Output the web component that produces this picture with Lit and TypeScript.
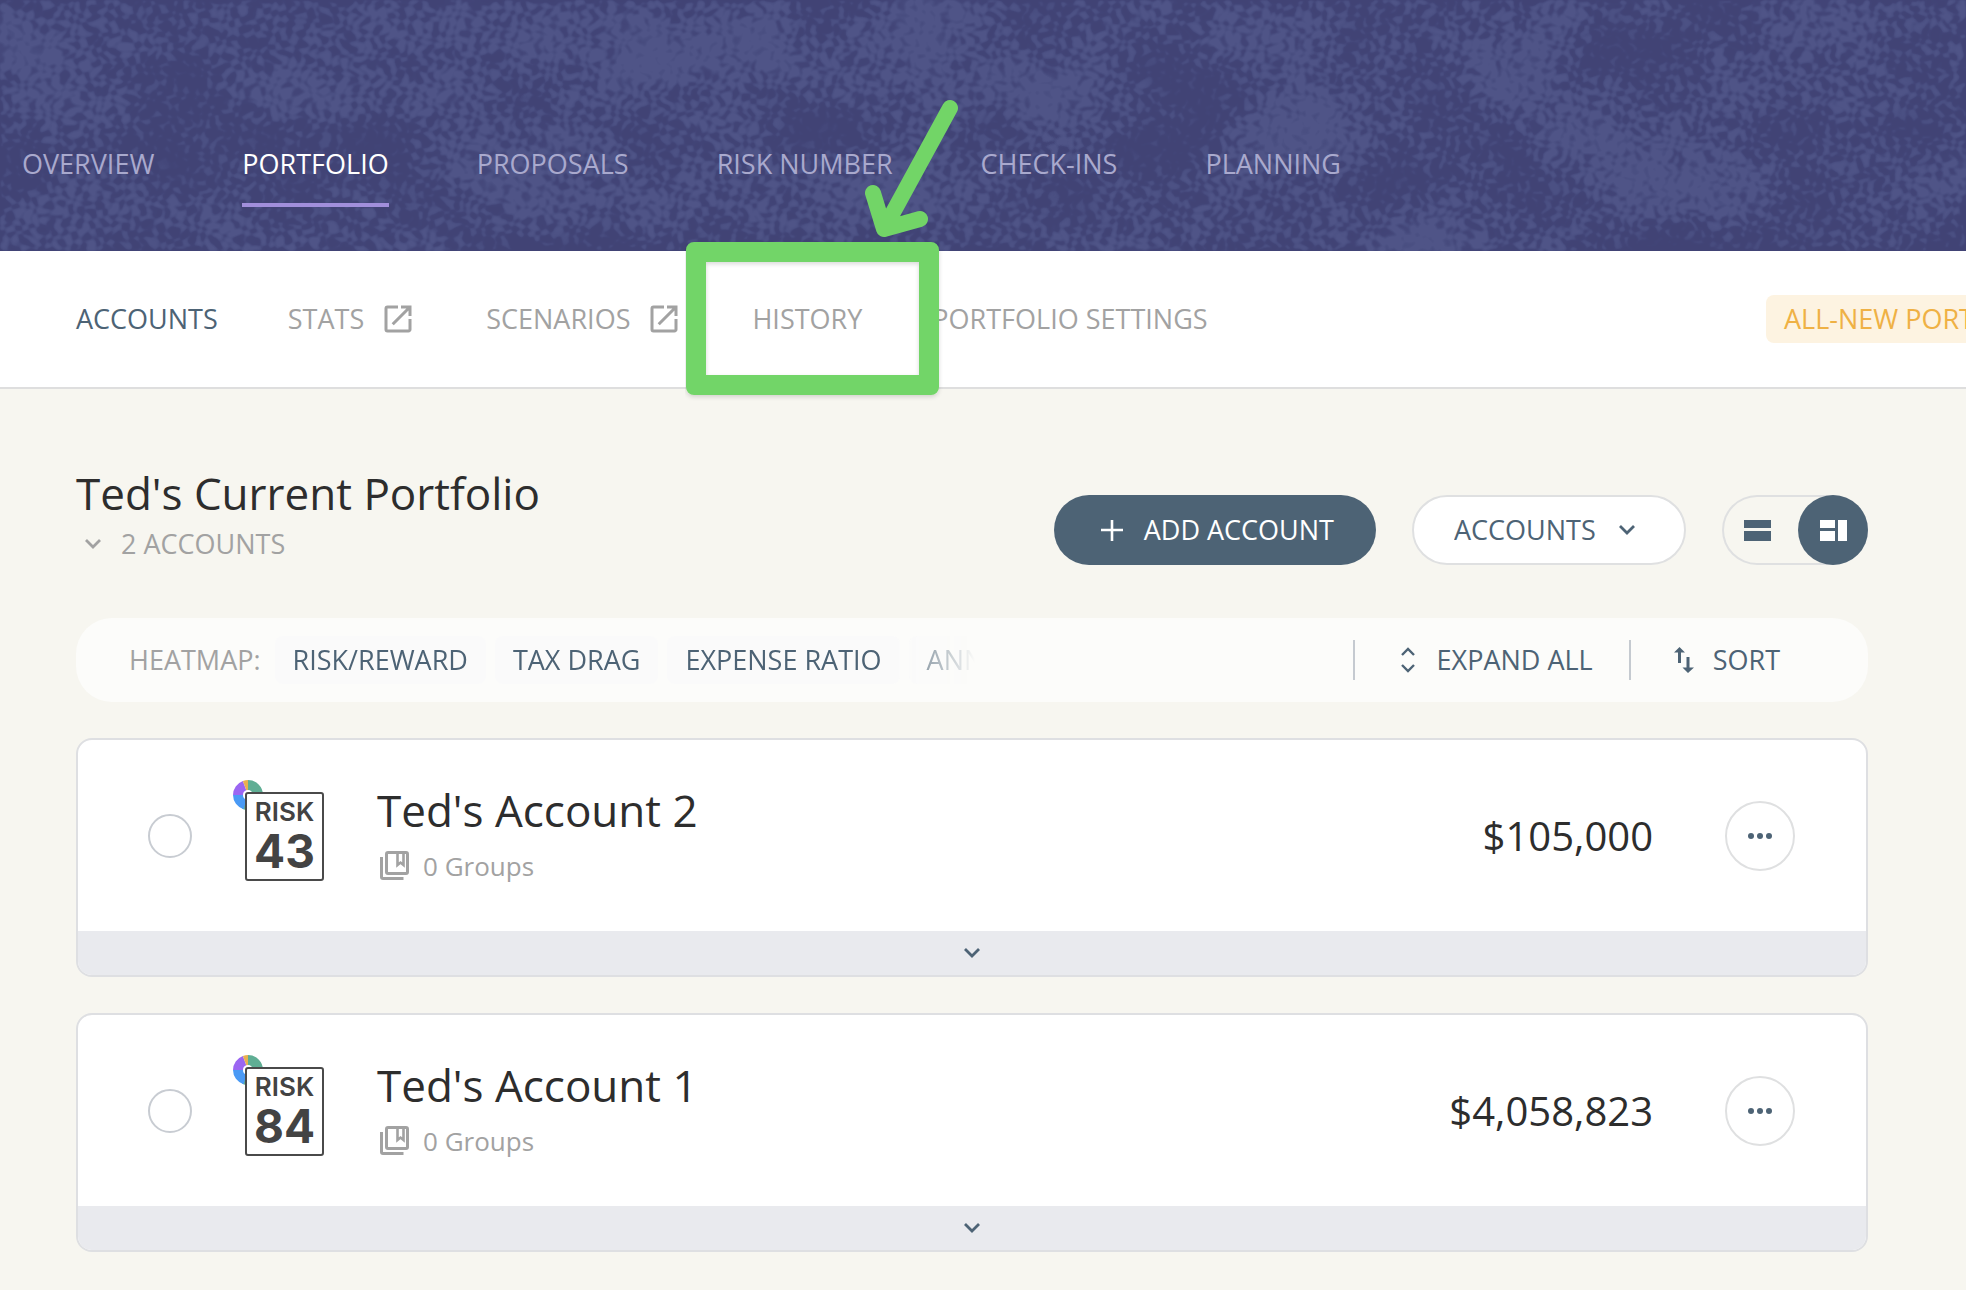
import { LitElement, html, css, svg } from "lit";
import { customElement, property, state } from "lit/decorators.js";

const chevronDown = html`<svg class="chevron" viewBox="0 0 18 12" aria-hidden="true">
  <path d="M2 2l7 7 7-7" fill="none" stroke="currentColor" stroke-width="2.8" />
</svg>`;

const openInNew = html`<svg class="open-icon" viewBox="0 0 24 24" aria-hidden="true">
  <path
    fill="currentColor"
    d="M19 19H5V5h7V3H5a2 2 0 0 0-2 2v14a2 2 0 0 0 2 2h14c1.1 0 2-.9 2-2v-7h-2v7zM14 3v2h3.59l-9.83 9.83 1.41 1.41L19 6.41V10h2V3h-7z"
  />
</svg>`;

const baseStyles = css`
  *,
  *::before,
  *::after {
    box-sizing: border-box;
  }
  button,
  select,
  input {
    margin: 0;
    padding: 0;
    border: 0;
    background: none;
    font: inherit;
    color: inherit;
    cursor: pointer;
  }
  a {
    color: inherit;
    text-decoration: none;
  }
  svg {
    display: block;
    flex: none;
  }
  .chevron {
    width: 18px;
    height: 12px;
  }
`;

@customElement("woven-texture")
export class WovenTexture extends LitElement {
  static styles = css`
    :host {
      display: block;
      overflow: hidden;
      background: #474c7f;
    }
    svg {
      display: block;
      width: 100%;
      height: 100%;
    }
  `;

  render() {
    return html`<svg aria-hidden="true">
      ${svg`
        <defs>
          <pattern id="threads" width="16" height="16" patternUnits="userSpaceOnUse" patternTransform="rotate(62)">
            <rect width="16" height="16" fill="#000" />
            <path d="M0 0h8v8H0zM8 8h8v8H8z" fill="#fff" />
          </pattern>
          <filter id="weave" x="0" y="0" width="100%" height="100%" color-interpolation-filters="sRGB">
            <feTurbulence type="fractalNoise" baseFrequency="0.04 0.07" numOctaves="2" seed="4" result="warp" />
            <feDisplacementMap in="SourceGraphic" in2="warp" scale="24" xChannelSelector="R" yChannelSelector="G" result="bent" />
            <feGaussianBlur in="bent" stdDeviation="1.8" result="soft" />
            <feTurbulence type="fractalNoise" baseFrequency="0.008 0.009" numOctaves="5" seed="27" />
            <feColorMatrix values="1 0 0 0 0  1 0 0 0 0  1 0 0 0 0  0 0 0 0 1" result="cloud" />
            <feComposite in="soft" in2="cloud" operator="arithmetic" k1="0" k2="1.1" k3="2.2" k4="-1.12" />
            <feComponentTransfer>
              <feFuncR type="table" tableValues="0.255 0.26 0.29 0.31" />
              <feFuncG type="table" tableValues="0.265 0.27 0.31 0.33" />
              <feFuncB type="table" tableValues="0.46 0.47 0.51 0.53" />
              <feFuncA type="linear" slope="0" intercept="1" />
            </feComponentTransfer>
          </filter>
        </defs>
        <rect width="100%" height="100%" fill="url(#threads)" filter="url(#weave)" />
      `}
    </svg>`;
  }
}

@customElement("risk-badge")
export class RiskBadge extends LitElement {
  @property({ type: Number }) value = 0;

  static styles = css`
    :host {
      display: block;
      position: relative;
    }
    .donut {
      position: absolute;
      left: -12px;
      top: -12px;
      width: 30px;
      height: 30px;
    }
    .sign {
      position: relative;
      box-sizing: border-box;
      width: 79px;
      height: 89px;
      padding-top: 6px;
      border: 2px solid #4a4a4a;
      border-radius: 3px;
      background: #fff;
      color: #434343;
      text-align: center;
      font-family: Inter, "Liberation Sans", sans-serif;
    }
    .label {
      font-size: 26px;
      line-height: 24px;
      font-weight: 600;
    }
    .number {
      font-size: 46px;
      line-height: 54px;
      font-weight: 700;
    }
  `;

  render() {
    return html`
      <svg class="donut" viewBox="0 0 30 30" aria-hidden="true">
        <g fill="none" stroke-width="10">
          <path stroke="#5fae94" d="M15 5a10 10 0 0 1 0 20" />
          <path stroke="#5fae94" d="M15 25a10 10 0 0 1-4-.8" />
          <path stroke="#4a9af5" d="M12 24.5A10 10 0 0 1 5 15" />
          <path stroke="#9b66f2" d="M5 15A10 10 0 0 1 11.600 5.600" />
          <path stroke="#e9b04f" d="M11.600 5.600A10 10 0 0 1 15 5" />
        </g>
      </svg>
      <div class="sign">
        <div class="label">RISK</div>
        <div class="number">${this.value}</div>
      </div>
    `;
  }
}

@customElement("account-card")
export class AccountCard extends LitElement {
  @property() name = "";
  @property() amount = "";
  @property({ type: Number }) risk = 0;
  @property({ type: Number }) groups = 0;

  static styles = [
    baseStyles,
    css`
      :host {
        display: block;
        overflow: hidden;
        border: 2px solid #dedfe2;
        border-radius: 16px;
        background: #fff;
        font-weight: 400;
      }
      .row {
        display: flex;
        align-items: center;
        padding: 40px 71px 39px 70px;
      }
      .pick {
        appearance: none;
        flex: none;
        width: 44px;
        height: 44px;
        margin-right: 53px;
        border: 2px solid #c8ccd2;
        border-radius: 50%;
      }
      .pick:checked {
        background: #4d6375;
      }
      .text {
        flex: 1;
        min-width: 0;
        padding-bottom: 10px;
        margin-left: 53px;
      }
      .name {
        margin: 0;
        font-size: 44px;
        line-height: 60px;
        font-weight: 400;
        color: #2d2d2d;
      }
      .groups {
        display: flex;
        align-items: center;
        gap: 10px;
        height: 42px;
        padding-top: 10px;
        font-size: 26px;
        line-height: 32px;
        color: #a2a2a2;
      }
      .groups svg {
        width: 36px;
        height: 36px;
      }
      .amount {
        font-size: 40px;
        line-height: 54px;
        color: #2d2d2d;
      }
      .more {
        display: grid;
        place-items: center;
        flex: none;
        width: 70px;
        height: 70px;
        margin-left: 72px;
        border: 2px solid #dfe0e1;
        border-radius: 50%;
        color: #4d6375;
      }
      .more svg {
        width: 24px;
        height: 6px;
      }
      .expand {
        display: grid;
        place-items: center;
        width: 100%;
        height: 44px;
        background: #e9eaee;
        color: #4d6375;
      }
    `,
  ];

  render() {
    return html`
      <div class="row">
        <input class="pick" type="checkbox" aria-label=${this.name} />
        <risk-badge .value=${this.risk}></risk-badge>
        <div class="text">
          <h2 class="name">${this.name}</h2>
          <div class="groups">
            <svg viewBox="0 0 36 36" aria-hidden="true">
              <g fill="none" stroke="currentColor" stroke-width="3">
                <rect x="9.500" y="4.500" width="21" height="21" rx="1.500" />
                <path d="M4.500 9v20a1.500 1.500 0 0 0 1.500 1.500h20.500" />
                <path d="M20.500 5v12l3-2.400 3 2.400V5" stroke-width="2.600" />
              </g>
            </svg>
            <span>${this.groups} Groups</span>
          </div>
        </div>
        <div class="amount">${this.amount}</div>
        <button class="more" aria-label="More">
          <svg viewBox="0 0 24 6" aria-hidden="true">
            <g fill="currentColor">
              <circle cx="3" cy="3" r="3" />
              <circle cx="12" cy="3" r="3" />
              <circle cx="21" cy="3" r="3" />
            </g>
          </svg>
        </button>
      </div>
      <button class="expand" aria-label="Expand">${chevronDown}</button>
    `;
  }
}

@customElement("app-root")
export class AppRoot extends LitElement {
  @state() private view: "list" | "board" = "board";

  private tabs = ["OVERVIEW", "PORTFOLIO", "PROPOSALS", "RISK NUMBER", "CHECK-INS", "PLANNING"];
  private heatmaps = ["RISK/REWARD", "TAX DRAG", "EXPENSE RATIO", "ANN"];
  private accounts = [
    { name: "Ted's Account 2", risk: 43, groups: 0, amount: "$105,000" },
    { name: "Ted's Account 1", risk: 84, groups: 0, amount: "$4,058,823" },
  ];

  static styles = [
    baseStyles,
    css`
      :host {
        display: block;
        position: relative;
        min-height: 100vh;
        overflow: hidden;
        background: #f7f6f0;
        color: #4d6375;
        font-family: "Open Sans", "Noto Sans", sans-serif;
        font-size: 27px;
        line-height: 36px;
        font-weight: 500;
      }
      .hero {
        position: relative;
        padding: 146px 22px 44px;
      }
      .texture {
        position: absolute;
        inset: 0;
      }
      .tabs {
        position: relative;
        display: flex;
        gap: 88px;
        white-space: nowrap;
        color: #a9a9cd;
      }
      .tab {
        padding-bottom: 21px;
        border-bottom: 4px solid transparent;
      }
      .tab.active {
        color: #fff;
        border-color: #a18fdb;
      }
      .subnav {
        display: flex;
        align-items: center;
        gap: 70px;
        height: 138px;
        padding-left: 76px;
        border-bottom: 2px solid #dedede;
        background: #fff;
        color: #a2a2a2;
        white-space: nowrap;
      }
      .sub {
        display: flex;
        align-items: center;
        gap: 16px;
      }
      .sub.active {
        color: #4d6375;
      }
      .open-icon {
        width: 36px;
        height: 36px;
      }
      .promo {
        flex: none;
        margin-left: auto;
        margin-right: -26px;
        padding: 6px 18px;
        border-radius: 8px;
        background: #fdf3e1;
        color: #efb145;
      }
      .callout {
        position: absolute;
        left: 685px;
        top: 94px;
        width: 274px;
        height: 310px;
        pointer-events: none;
      }
      .main {
        display: flex;
        flex-direction: column;
        gap: 36px;
        padding: 74px 98px 40px 76px;
      }
      .head {
        display: flex;
        align-items: flex-end;
        gap: 36px;
        padding-bottom: 17px;
      }
      .heading {
        flex: 1;
      }
      .title {
        margin: 0;
        font-size: 44px;
        line-height: 60px;
        font-weight: 400;
        color: #2d2d2d;
      }
      .count {
        display: flex;
        align-items: center;
        gap: 19px;
        padding-left: 8px;
        line-height: 42px;
        color: #a2a2a2;
      }
      .add {
        display: flex;
        align-items: center;
        gap: 20px;
        height: 70px;
        padding: 0 42px 0 46px;
        border-radius: 35px;
        background: #4d6375;
        color: #fff;
      }
      .add svg {
        width: 24px;
        height: 24px;
      }
      .picker {
        display: grid;
        align-items: center;
        justify-items: end;
        height: 70px;
      }
      .picker > * {
        grid-area: 1 / 1;
      }
      .picker select {
        appearance: none;
        height: 70px;
        padding: 0 88px 0 40px;
        border: 2px solid #dfe0e1;
        border-radius: 35px;
        background: #fff;
      }
      .picker svg {
        margin-right: 50px;
        pointer-events: none;
      }
      .views {
        display: flex;
        width: 146px;
        height: 70px;
        border-radius: 35px;
        box-shadow: inset 0 0 0 2px #dfe0e1;
      }
      .view {
        display: grid;
        place-items: center;
        width: 70px;
        height: 70px;
        border-radius: 50%;
      }
      .view + .view {
        margin-left: auto;
      }
      .view.on {
        background: #4d6375;
        color: #fff;
      }
      .view svg {
        width: 27px;
        height: 21px;
      }
      .bar {
        display: flex;
        align-items: center;
        height: 84px;
        padding: 0 88px 0 53px;
        border-radius: 36px;
        background: #fcfcfa;
        white-space: nowrap;
      }
      .bar-label {
        margin-right: 14px;
        color: #a2a2a2;
      }
      .chips {
        display: flex;
        gap: 9px;
        flex: 0 1 700px;
        overflow: hidden;
        mask-image: linear-gradient(to right, #000 88%, transparent 100%);
      }
      .chip {
        flex: none;
        height: 48px;
        padding: 0 18px;
        border-radius: 8px;
        background: #fafafa;
      }
      .tools {
        display: flex;
        align-items: center;
        margin-left: auto;
      }
      .tool {
        display: flex;
        align-items: center;
        gap: 18px;
        height: 40px;
        padding: 0 36px 0 42px;
        border-left: 2px solid #c5cad0;
      }
      .tool:last-child {
        padding-right: 0;
      }
      .tool svg {
        width: 22px;
        height: 26px;
      }
    `,
  ];

  private renderHead() {
    return html`
      <div class="head">
        <div class="heading">
          <h1 class="title">Ted's Current Portfolio</h1>
          <button class="count">${chevronDown}<span>2 ACCOUNTS</span></button>
        </div>
        <button class="add">
          <svg viewBox="0 0 24 24" aria-hidden="true">
            <path d="M12 2v21M1 12h22" stroke="currentColor" stroke-width="2.600" />
          </svg>
          <span>ADD ACCOUNT</span>
        </button>
        <label class="picker">
          <select aria-label="Group by">
            <option>ACCOUNTS</option>
          </select>
          ${chevronDown}
        </label>
        <div class="views">
          <button
            class="view ${this.view === "list" ? "on" : ""}"
            aria-label="List view"
            @click=${() => (this.view = "list")}
          >
            <svg viewBox="0 0 27 21" aria-hidden="true">
              <path fill="currentColor" d="M0 0h27v8H0zM0 11h27v10H0z" />
            </svg>
          </button>
          <button
            class="view ${this.view === "board" ? "on" : ""}"
            aria-label="Board view"
            @click=${() => (this.view = "board")}
          >
            <svg viewBox="0 0 27 21" aria-hidden="true">
              <path fill="currentColor" d="M0 0h15v8H0zM0 11h15v10H0zM18 0h9v21h-9z" />
            </svg>
          </button>
        </div>
      </div>
    `;
  }

  private renderBar() {
    return html`
      <div class="bar">
        <span class="bar-label">HEATMAP:</span>
        <div class="chips">${this.heatmaps.map((h) => html`<button class="chip">${h}</button>`)}</div>
        <div class="tools">
          <button class="tool">
            <svg viewBox="0 0 22 26" aria-hidden="true">
              <path d="M5 8l6-6 6 6M5 18l6 6 6-6" fill="none" stroke="currentColor" stroke-width="2.400" />
            </svg>
            <span>EXPAND ALL</span>
          </button>
          <button class="tool">
            <svg viewBox="0 0 22 26" aria-hidden="true">
              <path
                fill="currentColor"
                d="M6.500 0l5.500 5.500H8V16H5V5.500H1zM15 26l-5.500-5.500h4V10h3v10.500h4.500z"
              />
            </svg>
            <span>SORT</span>
          </button>
        </div>
      </div>
    `;
  }

  render() {
    return html`
      <header class="hero">
        <woven-texture class="texture"></woven-texture>
        <nav class="tabs" aria-label="Client">
          ${this.tabs.map(
            (t) => html`<a class="tab ${t === "PORTFOLIO" ? "active" : ""}" href="#">${t}</a>`
          )}
        </nav>
      </header>
      <nav class="subnav" aria-label="Portfolio">
        <a class="sub active" href="#">ACCOUNTS</a>
        <a class="sub" href="#">STATS ${openInNew}</a>
        <a class="sub" href="#">SCENARIOS ${openInNew}</a>
        <a class="sub" href="#">HISTORY</a>
        <a class="sub" href="#">PORTFOLIO SETTINGS</a>
        <a class="promo" href="#">ALL-NEW PORT</a>
      </nav>
      <main class="main">
        ${this.renderHead()} ${this.renderBar()}
        ${this.accounts.map(
          (a) => html`<account-card
            .name=${a.name}
            .risk=${a.risk}
            .groups=${a.groups}
            .amount=${a.amount}
          ></account-card>`
        )}
      </main>
      <svg class="callout" viewBox="0 0 274 310" aria-hidden="true">
        <defs>
          <filter id="lift" x="-10%" y="-10%" width="120%" height="120%">
            <feDropShadow dx="0" dy="2" stdDeviation="2" flood-opacity="0.15" />
          </filter>
        </defs>
        <g fill="none" stroke="#72d567">
          <g filter="url(#lift)">
            <path
              fill="#72d567"
              stroke="none"
              fill-rule="evenodd"
              d="M9 148h237a8 8 0 0 1 8 8v137a8 8 0 0 1-8 8H9a8 8 0 0 1-8-8V156a8 8 0 0 1 8-8zM21 168v113h213V168z"
            />
          </g>
          <path
            d="M265 14L199 135M188 99l11 36 36-10"
            stroke-width="16"
            stroke-linecap="round"
            stroke-linejoin="round"
          />
        </g>
      </svg>
    `;
  }
}
